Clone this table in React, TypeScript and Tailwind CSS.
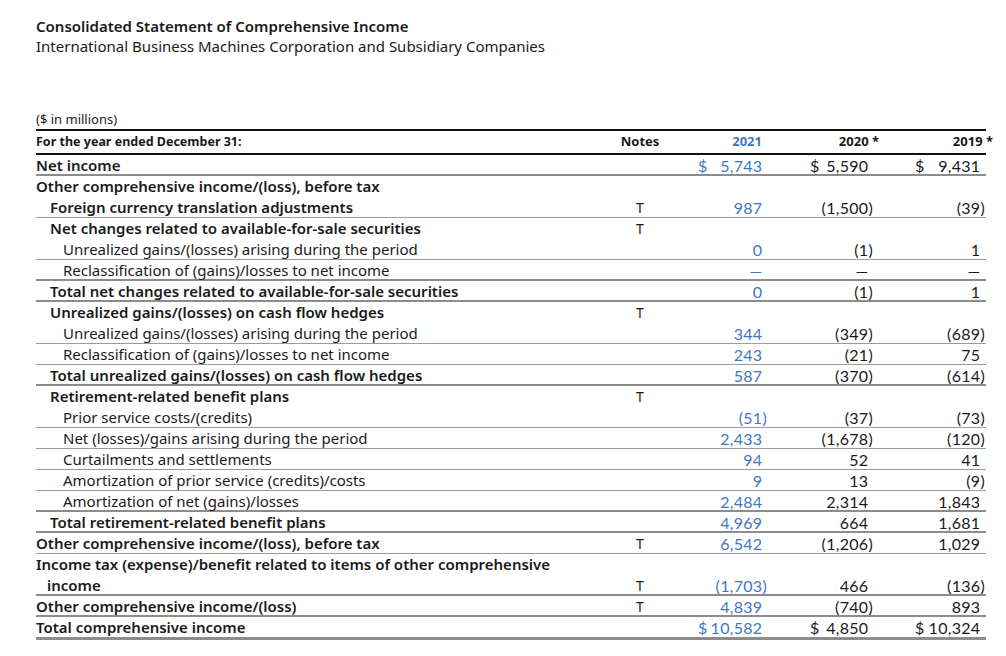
type Border = "none" | "thin" | "thick" | "total";

interface Row {
  label: string;
  indent: 0 | 1 | 2;
  bold?: boolean;
  note?: boolean;
  values?: [string, string, string];
  dollar?: boolean;
  border: Border;
  tall?: boolean;
}

const rows: Row[] = [
  { label: "Net income", indent: 0, bold: true, values: ["5,743", "5,590", "9,431"], dollar: true, border: "thick" },
  { label: "Other comprehensive income/(loss), before tax", indent: 0, bold: true, border: "none" },
  { label: "Foreign currency translation adjustments", indent: 1, bold: true, note: true, values: ["987", "(1,500)", "(39)"], border: "thin" },
  { label: "Net changes related to available-for-sale securities", indent: 1, bold: true, note: true, border: "none" },
  { label: "Unrealized gains/(losses) arising during the period", indent: 2, values: ["0", "(1)", "1"], border: "thin" },
  { label: "Reclassification of (gains)/losses to net income", indent: 2, values: ["—", "—", "—"], border: "thick" },
  { label: "Total net changes related to available-for-sale securities", indent: 1, bold: true, values: ["0", "(1)", "1"], border: "thick" },
  { label: "Unrealized gains/(losses) on cash flow hedges", indent: 1, bold: true, note: true, border: "none" },
  { label: "Unrealized gains/(losses) arising during the period", indent: 2, values: ["344", "(349)", "(689)"], border: "thin" },
  { label: "Reclassification of (gains)/losses to net income", indent: 2, values: ["243", "(21)", "75"], border: "thin" },
  { label: "Total unrealized gains/(losses) on cash flow hedges", indent: 1, bold: true, values: ["587", "(370)", "(614)"], border: "thick" },
  { label: "Retirement-related benefit plans", indent: 1, bold: true, note: true, border: "none" },
  { label: "Prior service costs/(credits)", indent: 2, values: ["(51)", "(37)", "(73)"], border: "thin" },
  { label: "Net (losses)/gains arising during the period", indent: 2, values: ["2,433", "(1,678)", "(120)"], border: "thin" },
  { label: "Curtailments and settlements", indent: 2, values: ["94", "52", "41"], border: "thin" },
  { label: "Amortization of prior service (credits)/costs", indent: 2, values: ["9", "13", "(9)"], border: "thin" },
  { label: "Amortization of net (gains)/losses", indent: 2, values: ["2,484", "2,314", "1,843"], border: "thick" },
  { label: "Total retirement-related benefit plans", indent: 1, bold: true, values: ["4,969", "664", "1,681"], border: "thick" },
  { label: "Other comprehensive income/(loss), before tax", indent: 0, bold: true, note: true, values: ["6,542", "(1,206)", "1,029"], border: "thin" },
  { label: "Income tax (expense)/benefit related to items of other comprehensive income", indent: 0, bold: true, note: true, values: ["(1,703)", "466", "(136)"], border: "thick", tall: true },
  { label: "Other comprehensive income/(loss)", indent: 0, bold: true, note: true, values: ["4,839", "(740)", "893"], border: "thick" },
  { label: "Total comprehensive income", indent: 0, bold: true, values: ["10,582", "4,850", "10,324"], dollar: true, border: "total" },
];

const borderClass: Record<Border, string> = {
  none: "",
  thin: "border-b border-[#9a9a9a]",
  thick: "border-b-2 border-[#8c8c8c]",
  total: "border-b-[3px] border-[#8c8c8c]",
};

const indentClass = ["pl-0", "pl-[14px]", "pl-[27px]"];
const dollarPad = ["pl-[18px]", "pl-[42px]", "pl-[41px]"];
const grid = "grid grid-cols-[564px_80px_88px_106px_112px]";
const labelFont = "font-['Noto_Sans',sans-serif]";
const numFont = "font-['Lato',sans-serif]";

const Amount = ({ value, col, dollar }: { value: string; col: number; dollar?: boolean }) => {
  const hangs = value.endsWith(")");
  const color = col === 0 ? "text-[#3f77bf]" : "text-[#1a1a1a]";
  return (
    <div className={`flex items-center justify-between pr-px ${numFont} text-[16px] tracking-[0.3px] leading-[21px] ${color}`}>
      <span className={dollarPad[col]}>{dollar ? "$" : ""}</span>
      <span>
        {value}
        {!hangs && <span className="invisible">)</span>}
      </span>
    </div>
  );
};

export default function App() {
  return (
    <div className={`min-h-[656px] bg-white pl-9 pt-4 text-[#1a1a1a] ${labelFont}`}>
      <div className="text-[15px] font-semibold leading-5">Consolidated Statement of Comprehensive Income</div>
      <div className="text-[15px] leading-5">International Business Machines Corporation and Subsidiary Companies</div>

      <div className="mt-[53px] w-[950px]">
        <div className="text-[13px] leading-5">($ in millions)</div>
        <div className={`${grid} h-[26px] items-center border-y-2 border-[#111]`}>
          <div className="text-[12.5px] font-bold">For the year ended December 31:</div>
          <div className="text-center text-[13px] font-bold">Notes</div>
          <div className="flex justify-end pr-[6px] text-[13px] font-bold text-[#3f77bf]">2021</div>
          <div className="flex justify-end pr-[6px] text-[13px] font-bold">
            <span className="-mr-[11px]">2020 *</span>
          </div>
          <div className="flex justify-end pr-[6px] text-[13px] font-bold">
            <span className="-mr-[13px]">2019 *</span>
          </div>
        </div>

        {rows.map((r, i) => (
          <div
            key={i}
            className={`${grid} ${r.tall ? "h-[42px] items-end" : r.border === "total" ? "h-[23px] items-center" : "h-[21px] items-center"} ${borderClass[r.border]}`}
          >
            <div className={`${indentClass[r.indent]} text-[15px] leading-[21px] ${r.bold ? "font-semibold" : ""}`}>
              {r.tall ? (
                <div className="max-w-[522px] pl-[11px] -indent-[11px]">{r.label}</div>
              ) : (
                r.label
              )}
            </div>
            <div className="text-center text-[14px] leading-[21px]">{r.note ? "T" : ""}</div>
            {r.values ? (
              r.values.map((v, c) => <Amount key={c} value={v} col={c} dollar={r.dollar} />)
            ) : (
              <>
                <div />
                <div />
                <div />
              </>
            )}
          </div>
        ))}
      </div>
    </div>
  );
}
